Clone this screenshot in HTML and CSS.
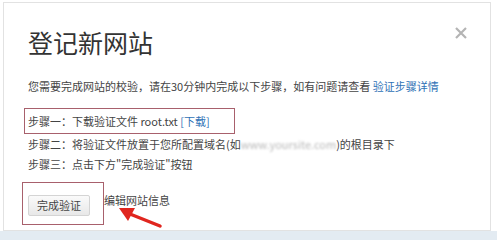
FILE: index.html
```html
<!DOCTYPE html>
<html lang="zh-CN">
<head>
  <title>登记新网站</title>
  <meta charset="UTF-8">
  <link rel="stylesheet" href="styles.css">
</head>
<body>
  <div class="dialog">
    <span class="close">
      <svg width="12" height="12" viewBox="0 0 12 12"><path d="M1 1 L11 11 M11 1 L1 11" stroke="#b4b4b4" stroke-width="2.2" fill="none"/></svg>
    </span>
    <h1 class="title">登记新网站</h1>
    <p class="desc">您需要完成网站的校验，请在30分钟内完成以下步骤，如有问题请查看 <a class="link">验证步骤详情</a></p>
    <div class="step step-mark">步骤一：下载验证文件 root.txt <a class="link">[下载]</a></div>
    <div class="step">步骤二：将验证文件放置于您所配置域名(如<span class="blur">www.yoursite.com</span>)的根目录下</div>
    <div class="step">步骤三：点击下方"完成验证"按钮</div>
    <div class="actions">
      <div class="btn-mark">
        <button class="btn">完成验证</button>
      </div>
      <span class="edit">编辑网站信息</span>
    </div>
    <svg class="arrow" width="50" height="26" viewBox="0 0 50 26">
      <path d="M44 22 L14 10" stroke="#e0261f" stroke-width="3.5" stroke-linecap="round"/>
      <polygon points="3,4 19,4 12,17" fill="#e0261f"/>
    </svg>
  </div>
  <div class="strip"></div>
</body>
</html>
```

FILE: styles.css
```css
body {
  margin: 0;
  background-color: #fff;
  font-family: "Noto Sans CJK SC", "Liberation Sans", sans-serif;
  color: #444;
}

.dialog {
  position: relative;
  margin: 2px 6px 0 3px;
  border: 1px solid #e2e2e2;
  height: 227px;
  padding: 0 24px;
}

.close {
  position: absolute;
  top: 24px;
  right: 23px;
}

.close svg {
  display: block;
}

.title {
  margin: 24px 0 0;
  font-size: 25px;
  line-height: 30px;
  font-weight: normal;
  color: #333;
}

.desc {
  margin: 19px 0 0;
  font-size: 11px;
  line-height: 20px;
}

.link {
  color: #2f72b6;
}

.step {
  font-size: 11px;
  line-height: 20px;
}

.step-mark {
  margin: 12px 0 0 -4px;
  width: 206px;
  padding-left: 3px;
  line-height: 24px;
  border: 1px solid #a8606c;
}

.blur {
  color: #b8b8b8;
  filter: blur(0.9px);
}

.actions {
  display: flex;
  margin-top: 8px;
}

.btn-mark {
  margin-left: -6px;
  width: 82px;
  height: 43px;
  padding: 8px 0 0 5px;
  box-sizing: border-box;
  border: 1px solid #a8606c;
}

.btn {
  width: 62px;
  height: 21px;
  padding: 0;
  font-family: inherit;
  font-size: 11px;
  color: #444;
  border: 1px solid #d4d4d4;
  border-radius: 2px;
  background: linear-gradient(#fafafa, #e8e8e8);
}

.edit {
  margin-top: 8px;
  font-size: 11px;
  line-height: 20px;
  color: #444;
}

.arrow {
  position: absolute;
  left: 112px;
  top: 201px;
}

.strip {
  height: 9px;
  background-color: #e3ebf2;
}
```
